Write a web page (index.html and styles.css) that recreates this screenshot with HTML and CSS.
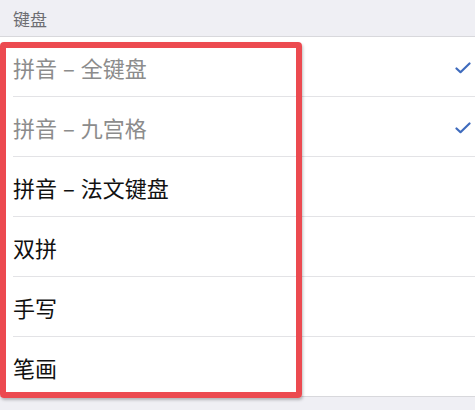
FILE: index.html
```html
<!DOCTYPE html>
<html lang="zh-CN">
<head>
<meta charset="utf-8">
<link rel="stylesheet" href="styles.css">
</head>
<body>
<div class="page">
  <div class="section-header">键盘</div>
  <ul class="list">
    <li class="row dim"><span class="label">拼音<span class="sep">–</span>全键盘</span><svg class="check" viewBox="0 0 16 12"><path d="M1.5 6.5 L5.5 10.2 L14.5 1.5" fill="none" stroke="#3f6bbd" stroke-width="2.2" stroke-linecap="round" stroke-linejoin="round"/></svg></li>
    <li class="row dim"><span class="label">拼音<span class="sep">–</span>九宫格</span><svg class="check" viewBox="0 0 16 12"><path d="M1.5 6.5 L5.5 10.2 L14.5 1.5" fill="none" stroke="#3f6bbd" stroke-width="2.2" stroke-linecap="round" stroke-linejoin="round"/></svg></li>
    <li class="row"><span class="label">拼音<span class="sep">–</span>法文键盘</span></li>
    <li class="row"><span class="label">双拼</span></li>
    <li class="row"><span class="label">手写</span></li>
    <li class="row last"><span class="label">笔画</span></li>
  </ul>
  <div class="highlight"></div>
</div>
</body>
</html>
```

FILE: styles.css
```css
html, body {
  margin: 0;
  padding: 0;
}
body {
  background: #efeff4;
  font-family: "Noto Sans CJK SC", "Noto Sans", sans-serif;
  width: 475px;
  height: 410px;
  overflow: hidden;
}
.page {
  position: relative;
}
.section-header {
  height: 37px;
  box-sizing: border-box;
  padding-left: 13px;
  display: flex;
  align-items: center;
  font-size: 17px;
  color: #6d6d72;
  border-bottom: 1px solid #d8d8dc;
}
.list {
  list-style: none;
  margin: 0;
  padding: 0 0 0 13px;
  background: #fff;
  border-bottom: 1px solid #d8d8dc;
}
.row {
  height: 60px;
  box-sizing: border-box;
  display: flex;
  align-items: center;
  justify-content: space-between;
  padding-right: 4px;
  border-bottom: 1px solid #e3e3e6;
  font-size: 22px;
  color: #111;
}
.row.last {
  border-bottom: none;
  height: 59px;
}
.row.dim {
  color: #8c8c8c;
}
.sep {
  margin: 0 6px;
}
.check {
  width: 16px;
  height: 12px;
  margin-top: 2px;
}
.highlight {
  position: absolute;
  left: 0;
  top: 42px;
  width: 302px;
  height: 356px;
  box-sizing: border-box;
  border: 6px solid #ec4a50;
  border-radius: 4px;
  box-shadow: 1px 2px 3px rgba(0,0,0,0.25);
}
```
